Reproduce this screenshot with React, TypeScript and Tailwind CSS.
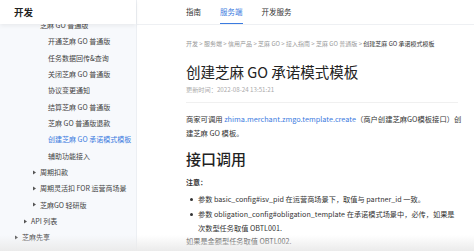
const FONT = { fontFamily: '"Noto Sans CJK SC", "Noto Sans", sans-serif' }

type NavItem = { label: string; indent: number; caret?: boolean; active?: boolean }

const NAV: NavItem[] = [
  { label: '芝麻 GO 普通版', indent: 40 },
  { label: '开通芝麻 GO 普通版', indent: 48 },
  { label: '任务数据回传&查询', indent: 48 },
  { label: '关闭芝麻 GO 普通版', indent: 48 },
  { label: '协议变更通知', indent: 48 },
  { label: '结算芝麻 GO 普通版', indent: 48 },
  { label: '芝麻 GO 普通版退款', indent: 48 },
  { label: '创建芝麻 GO 承诺模式模板', indent: 48, active: true },
  { label: '辅助功能接入', indent: 48 },
  { label: '周期扣款', indent: 40, caret: true },
  { label: '周期灵活扣 FOR 运营商场景', indent: 40, caret: true },
  { label: '芝麻GO 轻研版', indent: 40, caret: true },
  { label: 'API 列表', indent: 31, caret: true },
  { label: '芝麻先享', indent: 22, caret: true },
]

function Caret() {
  return (
    <svg width="3" height="5" viewBox="0 0 3 5" className="mr-[4px] shrink-0">
      <path d="M0 0.5 L3 2.5 L0 4.5 Z" fill="#555" />
    </svg>
  )
}

function Sidebar() {
  return (
    <div className="w-[137px] shrink-0 flex flex-col bg-[#f7f9fc] border-r border-[#eceff3]">
      <div className="relative z-10 h-[24px] bg-white pl-[14px] flex items-center shadow-[0_2px_4px_rgba(0,0,0,0.06)]">
        <span className="text-[9.5px] font-bold text-[#222]">开发</span>
      </div>
      <div className="-mt-[7px] flex flex-col">
        {NAV.map((n, i) => (
          <div
            key={i}
            className={`h-[16.33px] flex items-center text-[7px] whitespace-nowrap ${n.active ? 'text-[#3b7be0]' : 'text-[#444]'}`}
            style={{ paddingLeft: n.caret ? n.indent - 7 : n.indent }}
          >
            {n.caret && <Caret />}
            {n.label}
          </div>
        ))}
      </div>
    </div>
  )
}

function Tabs() {
  const tabs = ['指南', '服务端', '开发服务']
  return (
    <div className="h-[25px] border-b border-[#eef0f3] flex items-stretch pl-[49px] gap-[19px] text-[7.5px]">
      {tabs.map((t) => (
        <div
          key={t}
          className={`flex items-center ${t === '服务端' ? 'text-[#3b7be0] border-b-[1.5px] border-[#3b7be0]' : 'text-[#333]'}`}
        >
          {t}
        </div>
      ))}
    </div>
  )
}

function Bullet() {
  return <span className="absolute -left-[8px] top-[6px] w-[2.5px] h-[2.5px] rounded-full bg-[#333]" />
}

export default function App() {
  return (
    <div className="relative w-[474px] h-[251px] overflow-hidden bg-white flex" style={FONT}>
      <Sidebar />
      <div className="flex-1 flex flex-col">
        <Tabs />
        <div className="pl-[49px] pr-[16px] flex flex-col">
          <div className="mt-[14px] text-[6px] text-[#999] whitespace-nowrap">
            开发 &gt; 服务端 &gt; 信用产品 &gt; 芝麻 GO &gt; 接入指南 &gt; 芝麻 GO 普通版 &gt;{' '}
            <span className="text-[#333]">创建芝麻 GO 承诺模式模板</span>
          </div>
          <h1 className="mt-[14px] text-[14.5px] leading-[20px] text-[#222] whitespace-nowrap">创建芝麻 GO 承诺模式模板</h1>
          <div className="mt-[3px] text-[6.2px] text-[#aaa]">更新时间：2022-08-24 13:51:21</div>
          <div className="mt-[8px] border-t border-[#f0f0f0]" />
          <p className="mt-[9px] -mr-[8px] text-[7.3px] leading-[14px] text-[#333]">
            商家可调用 <span className="text-[#3b7be0]">zhima.merchant.zmgo.template.create</span>
            （商户创建芝麻GO模板接口）创建芝麻 GO 模板。
          </p>
          <h2 className="mt-[9px] text-[15px] leading-[20px] font-medium text-[#222]">接口调用</h2>
          <div className="mt-[6px] text-[7px] leading-[14px] font-bold text-[#333]">注意：</div>
          <ul className="mt-[3px] pl-[12px] text-[7.2px] leading-[14px] text-[#333]">
            <li className="relative">
              <Bullet />
              参数 basic_config#isv_pid 在运营商场景下，取值与 partner_id 一致。
            </li>
            <li className="relative mt-[1px]">
              <Bullet />
              参数 obligation_config#obligation_template 在承诺模式场景中，必传，如果是次数型任务取值 OBTL001.
            </li>
          </ul>
          <div className="text-[7.2px] leading-[13px] text-[#333]">如果是金额型任务取值 OBTL002.</div>
        </div>
      </div>
      <div className="pointer-events-none absolute left-0 right-0 bottom-0 h-[16px] bg-gradient-to-b from-white/0 to-[#ebebeb]" />
    </div>
  )
}
